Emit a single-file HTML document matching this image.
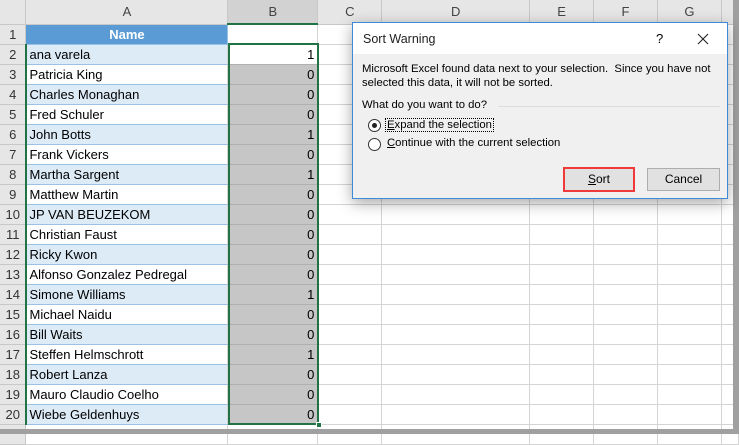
<!DOCTYPE html>
<html><head><meta charset="utf-8"><style>
*{margin:0;padding:0;box-sizing:border-box}
body{width:739px;height:434px;overflow:hidden;background:#fff;font-family:"Liberation Sans",sans-serif;position:relative}
.a{position:absolute}
table{border-collapse:collapse;position:absolute;left:0;top:0;table-layout:fixed}
td{height:20px;border-right:1px solid #d4d4d4;border-bottom:1px solid #d4d4d4;font-size:13px;padding:0 3px;white-space:nowrap;overflow:hidden;color:#000}
tr.h td{height:24px;background:#e6e6e6;text-align:center;color:#444;border-color:#c8c8c8;font-size:13px}
td.rn{background:#e6e6e6;text-align:center;color:#333;border-color:#c8c8c8;padding:0;font-size:13px}
td.A{border-bottom-color:#9bc2e6;border-right-color:#d4d4d4}
tr.e td.A{background:#ddebf7}
td.B{background:#c6c6c6;text-align:right;border-color:#b0b0b0}
.dlg{left:352px;top:22px;width:376px;height:177px;background:#f0f0f0;border:1px solid #3c8ad8;box-shadow:0 4px 14px rgba(0,0,0,.35);font-size:11.3px;color:#000;white-space:nowrap}
.tb{height:31px;background:#fff;position:relative}
.btn{position:absolute;top:145px;height:23px;border:1px solid #adadad;background:#e1e1e1;text-align:center;line-height:21px;font-size:12px}
.rad{position:absolute;width:13px;height:13px;border:1px solid #333;border-radius:50%;background:#fff}
</style></head><body>
<table>
<colgroup><col style="width:26px"><col style="width:202px"><col style="width:90px"><col style="width:64px"><col style="width:148px"><col style="width:64px"><col style="width:64px"><col style="width:64px"><col style="width:17px"></colgroup>
<tr class="h"><td></td><td>A</td><td style="background:#d2d2d2;border-bottom:2px solid #217346">B</td><td>C</td><td>D</td><td>E</td><td>F</td><td>G</td><td></td></tr>
<tr><td class="rn">1</td><td style="background:#5b9bd5;color:#fff;font-weight:bold;text-align:center;border-color:#9bc2e6">Name</td><td></td><td></td><td></td><td></td><td></td><td></td><td></td></tr>
<tr class="e"><td class="rn">2</td><td class="A">ana varela</td><td class="B" style="background:#fff">1</td><td></td><td></td><td></td><td></td><td></td><td></td></tr>
<tr><td class="rn">3</td><td class="A">Patricia King</td><td class="B">0</td><td></td><td></td><td></td><td></td><td></td><td></td></tr>
<tr class="e"><td class="rn">4</td><td class="A">Charles Monaghan</td><td class="B">0</td><td></td><td></td><td></td><td></td><td></td><td></td></tr>
<tr><td class="rn">5</td><td class="A">Fred Schuler</td><td class="B">0</td><td></td><td></td><td></td><td></td><td></td><td></td></tr>
<tr class="e"><td class="rn">6</td><td class="A">John Botts</td><td class="B">1</td><td></td><td></td><td></td><td></td><td></td><td></td></tr>
<tr><td class="rn">7</td><td class="A">Frank Vickers</td><td class="B">0</td><td></td><td></td><td></td><td></td><td></td><td></td></tr>
<tr class="e"><td class="rn">8</td><td class="A">Martha Sargent</td><td class="B">1</td><td></td><td></td><td></td><td></td><td></td><td></td></tr>
<tr><td class="rn">9</td><td class="A">Matthew Martin</td><td class="B">0</td><td></td><td></td><td></td><td></td><td></td><td></td></tr>
<tr class="e"><td class="rn">10</td><td class="A">JP VAN BEUZEKOM</td><td class="B">0</td><td></td><td></td><td></td><td></td><td></td><td></td></tr>
<tr><td class="rn">11</td><td class="A">Christian Faust</td><td class="B">0</td><td></td><td></td><td></td><td></td><td></td><td></td></tr>
<tr class="e"><td class="rn">12</td><td class="A">Ricky Kwon</td><td class="B">0</td><td></td><td></td><td></td><td></td><td></td><td></td></tr>
<tr><td class="rn">13</td><td class="A">Alfonso Gonzalez Pedregal</td><td class="B">0</td><td></td><td></td><td></td><td></td><td></td><td></td></tr>
<tr class="e"><td class="rn">14</td><td class="A">Simone Williams</td><td class="B">1</td><td></td><td></td><td></td><td></td><td></td><td></td></tr>
<tr><td class="rn">15</td><td class="A">Michael Naidu</td><td class="B">0</td><td></td><td></td><td></td><td></td><td></td><td></td></tr>
<tr class="e"><td class="rn">16</td><td class="A">Bill Waits</td><td class="B">0</td><td></td><td></td><td></td><td></td><td></td><td></td></tr>
<tr><td class="rn">17</td><td class="A">Steffen Helmschrott</td><td class="B">1</td><td></td><td></td><td></td><td></td><td></td><td></td></tr>
<tr class="e"><td class="rn">18</td><td class="A">Robert Lanza</td><td class="B">0</td><td></td><td></td><td></td><td></td><td></td><td></td></tr>
<tr><td class="rn">19</td><td class="A">Mauro Claudio Coelho</td><td class="B">0</td><td></td><td></td><td></td><td></td><td></td><td></td></tr>
<tr class="e"><td class="rn">20</td><td class="A">Wiebe Geldenhuys</td><td class="B">0</td><td></td><td></td><td></td><td></td><td></td><td></td></tr>
<tr><td class="rn"></td><td></td><td></td><td></td><td></td><td></td><td></td><td></td><td></td></tr>
</table>
<div class="a" style="left:733px;top:0;width:6px;height:434px;background:#a0a0a0"></div>
<div class="a" style="left:0;top:429px;width:739px;height:5px;background:#a0a0a0"></div>
<div class="a" style="left:25px;top:44px;width:2px;height:381px;background:#217346"></div>
<div class="a" style="left:228px;top:43px;width:91px;height:382px;border:2px solid #217346"></div>
<div class="a" style="left:316px;top:422px;width:6px;height:6px;background:#217346;border:1px solid #fff"></div>
<div class="a dlg">
<div class="tb"><span class="a" style="left:10px;top:9px;font-size:12.5px;color:#222">Sort Warning</span><span class="a" style="left:303px;top:8px;font-size:13px">?</span>
<svg class="a" style="left:344px;top:10px" width="12" height="12" viewBox="0 0 12 12"><path d="M1 1L11 11M11 1L1 11" stroke="#222" stroke-width="1.1" fill="none"/></svg></div>
<div class="a" style="left:9px;top:39px;line-height:14px">Microsoft Excel found data next to your selection.&nbsp; Since you have not<br>selected this data, it will not be sorted.</div>
<div class="a" style="left:9px;top:76px">What do you want to do?</div>
<div class="a" style="left:145px;top:83px;width:222px;height:1px;background:#dcdcdc"></div>
<div class="rad" style="left:15px;top:96px"><div class="a" style="left:3px;top:3px;width:5px;height:5px;border-radius:50%;background:#222"></div></div>
<div class="a" style="left:32px;top:95px;border:1px dotted #000;padding:0 1px"><u>E</u>xpand the selection</div>
<div class="rad" style="left:15px;top:115px"></div>
<div class="a" style="left:34px;top:114px"><u>C</u>ontinue with the current selection</div>
<div class="btn" style="left:210px;width:72px;border:2px solid #f03a3a;top:144px;height:25px"><u>S</u>ort</div>
<div class="btn" style="left:294px;width:73px">Cancel</div>
</div>
</body></html>
